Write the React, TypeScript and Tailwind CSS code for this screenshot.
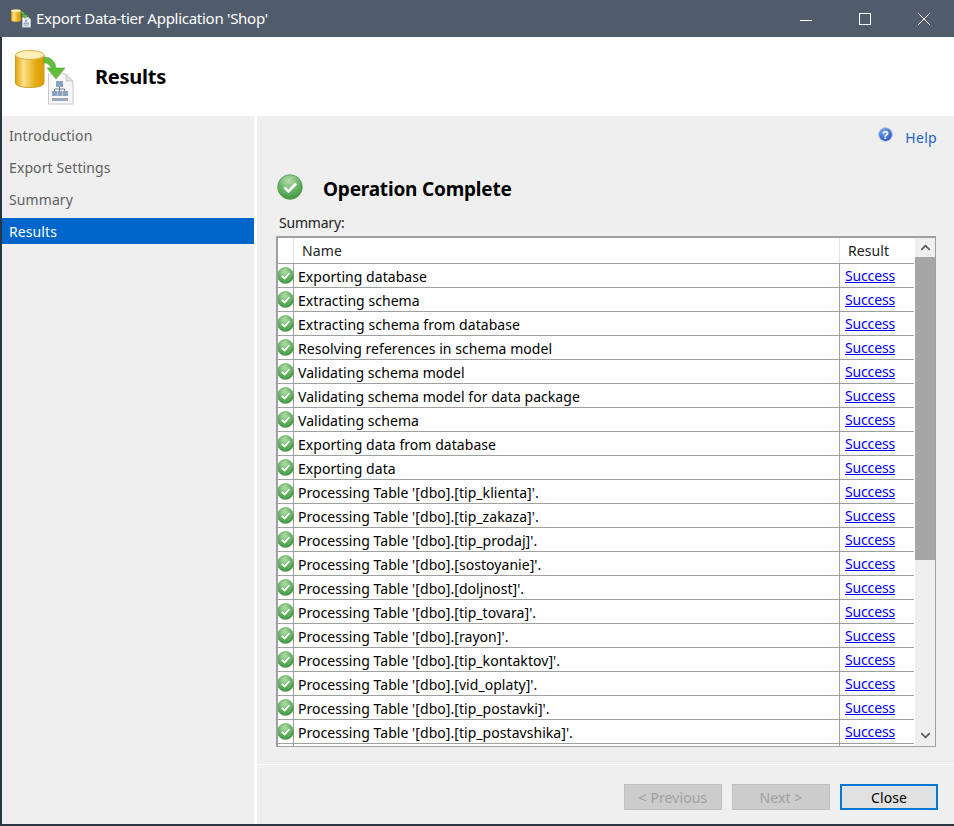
import { useId } from 'react';
import { ChevronUp, ChevronDown } from 'lucide-react';

const rows = [
  'Exporting database',
  'Extracting schema',
  'Extracting schema from database',
  'Resolving references in schema model',
  'Validating schema model',
  'Validating schema model for data package',
  'Validating schema',
  'Exporting data from database',
  'Exporting data',
  "Processing Table '[dbo].[tip_klienta]'.",
  "Processing Table '[dbo].[tip_zakaza]'.",
  "Processing Table '[dbo].[tip_prodaj]'.",
  "Processing Table '[dbo].[sostoyanie]'.",
  "Processing Table '[dbo].[doljnost]'.",
  "Processing Table '[dbo].[tip_tovara]'.",
  "Processing Table '[dbo].[rayon]'.",
  "Processing Table '[dbo].[tip_kontaktov]'.",
  "Processing Table '[dbo].[vid_oplaty]'.",
  "Processing Table '[dbo].[tip_postavki]'.",
  "Processing Table '[dbo].[tip_postavshika]'.",
];

const navItems = ['Introduction', 'Export Settings', 'Summary', 'Results'];

function CheckIcon({ size }: { size: number }) {
  const id = useId();
  return (
    <svg width={size} height={size} viewBox="0 0 26 26" className="shrink-0">
      <defs>
        <radialGradient id={id} cx="45%" cy="25%" r="85%">
          <stop offset="0%" stopColor="#b5dcae" />
          <stop offset="50%" stopColor="#69b565" />
          <stop offset="100%" stopColor="#348a35" />
        </radialGradient>
      </defs>
      <circle cx="13" cy="13" r="12.3" fill={`url(#${id})`} stroke="#4f9a4f" strokeWidth="0.8" />
      <path d="M7.5 13.5 L11.5 17.5 L19 9.5" fill="none" stroke="#fff" strokeWidth="2.6" />
    </svg>
  );
}

function ExportDbIcon({ width }: { width: number }) {
  const id = useId();
  return (
    <svg width={width} height={(width * 55) / 59} viewBox="0 0 59 55" className="shrink-0">
      <defs>
        <linearGradient id={`${id}-body`} x1="0" x2="1" y1="0" y2="0">
          <stop offset="0%" stopColor="#e2a206" />
          <stop offset="28%" stopColor="#fbe28a" />
          <stop offset="70%" stopColor="#e6ac14" />
          <stop offset="100%" stopColor="#dc9c00" />
        </linearGradient>
      </defs>
      <path d="M0.500 5 V33 C0.500 39 29 39 29 33 V5 Z" fill={`url(#${id}-body)`} stroke="#c99a2e" />
      <ellipse cx="14.750" cy="5" rx="14.250" ry="4.500" fill="#fdf0b8" stroke="#d9ae45" />
      <path d="M33.500 24 H51 L58 31 V54 H33.500 Z" fill="#f7f7f7" stroke="#c8c8c8" />
      <path d="M51 24 V31 H58" fill="#dedede" stroke="#c8c8c8" />
      <path d="M29 7 C36 7 40 11 41 18 L50 18 L41 29 L32 18 L36 18 C35 15 33 13 29 13 Z" fill="#62bd3a" stroke="#4a9e2a" strokeWidth="0.5" />
      <rect x="41" y="31" width="7" height="6" fill="#8aa2c0" />
      <path d="M44.500 37 V39 M39.500 41 V39 H49.500 V41 M44.500 39 V41" stroke="#6f7f94" fill="none" />
      <rect x="37" y="41" width="5" height="5" fill="#8aa2c0" />
      <rect x="42.500" y="41" width="5" height="5" fill="#8aa2c0" />
      <rect x="48" y="41" width="5" height="5" fill="#8aa2c0" />
      <rect x="37" y="48" width="16" height="3" fill="#9aa9bb" />
    </svg>
  );
}

function HelpIcon() {
  const id = useId();
  return (
    <svg width="15" height="15" viewBox="0 0 15 15">
      <defs>
        <radialGradient id={id} cx="40%" cy="30%" r="75%">
          <stop offset="0%" stopColor="#7fa8f0" />
          <stop offset="100%" stopColor="#1f4fc0" />
        </radialGradient>
      </defs>
      <circle cx="7.500" cy="7.500" r="6.800" fill={`url(#${id})`} stroke="#a9c4ee" />
      <text x="7.500" y="11.500" textAnchor="middle" fontSize="11" fontWeight="700" fill="#fff" fontFamily="'Liberation Sans', sans-serif">?</text>
    </svg>
  );
}

function Row({ name }: { name: string }) {
  return (
    <div className="flex h-6 border-b border-[#a0a0a0]">
      <div className="flex w-[16px] shrink-0 items-start border-r border-[#a0a0a0] pt-[3px]">
        <div className="-ml-px"><CheckIcon size={17} /></div>
      </div>
      <div className="flex-1 truncate pl-[4px] leading-[25px] tracking-[0.05px] text-black">{name}</div>
      <div className="w-[75px] shrink-0 border-l border-[#a0a0a0] pl-[5px] leading-[24px] tracking-[-0.15px]">
        <span className="text-[#0000ff] underline">Success</span>
      </div>
    </div>
  );
}

export default function App() {
  return (
    <div className="flex h-[826px] w-[954px] flex-col overflow-hidden bg-white font-['Noto_Sans',sans-serif] text-[14px] tracking-[0.1px]">
      {/* title bar */}
      <div className="flex h-[37px] shrink-0 items-center bg-[#505c6b] pl-[11px] text-white">
        <ExportDbIcon width={20} />
        <span className="mb-[1px] ml-[5px] text-[15px] tracking-[-0.27px]">Export Data-tier Application 'Shop'</span>
        <div className="ml-auto flex items-center">
          <svg width="14" height="14" viewBox="0 0 14 14" className="mr-[45px]" fill="none" stroke="#fff">
            <path d="M1 8.500 H13" />
          </svg>
          <svg width="14" height="14" viewBox="0 0 14 14" className="mr-[45px]" fill="none" stroke="#fff">
            <rect x="1.500" y="1.500" width="11" height="11" />
          </svg>
          <svg width="14" height="14" viewBox="0 0 14 14" className="mr-[23px]" fill="none" stroke="#fff">
            <path d="M1 1 L13 13 M13 1 L1 13" />
          </svg>
        </div>
      </div>

      <div className="flex flex-1 flex-col border-b-2 border-l-2 border-[#2a3542]">
        {/* header */}
        <div className="flex h-[79px] shrink-0 items-center pl-[13px] pt-[2px]">
          <ExportDbIcon width={59} />
          <span className="mb-[1px] ml-[21px] text-[20px] font-bold tracking-[-0.25px] text-black">Results</span>
        </div>

        <div className="flex min-h-0 flex-1 gap-[3px]">
          {/* sidebar */}
          <div className="w-[252px] shrink-0 bg-[#efefef] pt-[6px]">
            {navItems.map((item) => (
              <div
                key={item}
                className={`mb-[6px] h-[26px] pl-[7px] leading-[28px] ${item === 'Results' ? 'bg-[#0066cc] text-white' : 'text-[#5f5f5f]'}`}
              >
                {item}
              </div>
            ))}
          </div>

          {/* main */}
          <div className="flex min-w-0 flex-1 flex-col bg-[#efefef]">
            <div className="flex h-[648px] shrink-0 flex-col pl-[19px]">
              <div className="mr-[17px] flex h-[22px] items-start justify-end pt-[8px] text-[#1c62c4]">
                <div className="mr-[12px] mt-[3px]"><HelpIcon /></div>
                <span className="mt-[3px] tracking-[0.3px]">Help</span>
              </div>
              <div className="ml-px mt-[36px] flex h-[26px] items-center">
                <CheckIcon size={26} />
                <span className="ml-[20px] mt-[5px] text-[19px] font-bold tracking-[-0.2px] text-black">Operation Complete</span>
              </div>
              <div className="mb-[3px] ml-[3px] mt-[13px] leading-[20px] tracking-[-0.2px] text-[#222]">Summary:</div>

              <div className="flex h-[511px] w-[660px] border border-l-2 border-t-2 border-[#a0a0a0] bg-white">
                <div className="min-w-0 flex-1 overflow-hidden">
                  <div className="flex h-[26px] border-b border-[#a0a0a0]">
                    <div className="w-[16px] shrink-0 border-r border-[#e3e3e3]" />
                    <div className="flex-1 pl-[8px] leading-[25px] text-[#222]">Name</div>
                    <div className="w-[75px] shrink-0 border-l border-[#e3e3e3] pl-[8px] leading-[25px] text-[#222]">Result</div>
                  </div>
                  {rows.map((r) => (
                    <Row key={r} name={r} />
                  ))}
                  <div className="flex h-6">
                    <div className="w-[16px] shrink-0 border-r border-[#a0a0a0]" />
                    <div className="flex-1" />
                    <div className="w-[75px] shrink-0 border-l border-[#a0a0a0]" />
                  </div>
                </div>
                {/* scrollbar */}
                <div className="flex w-[21px] shrink-0 flex-col items-center border-l border-white bg-[#efefef]">
                  <div className="flex h-[19px] items-center justify-center"><ChevronUp size={15} strokeWidth={2.5} className="text-[#555]" /></div>
                  <div className="h-[303px] w-full bg-[#a6a6a6]" />
                  <div className="flex flex-1 items-end justify-center pb-[3px]"><ChevronDown size={15} strokeWidth={2.5} className="text-[#555]" /></div>
                </div>
              </div>
            </div>

            {/* footer */}
            <div className="flex flex-1 items-start justify-end gap-[10px] border-t border-white pr-[16px] pt-[19px]">
              <button className="h-[26px] w-[98px] border border-[#bfbfbf] bg-[#cccccc] text-[#a0a0a0]">&lt; Previous</button>
              <button className="h-[26px] w-[98px] border border-[#bfbfbf] bg-[#cccccc] text-[#a0a0a0]">Next &gt;</button>
              <button className="h-[26px] w-[98px] border-2 border-[#0078d7] bg-[#e1e1e1] text-black">Close</button>
            </div>
          </div>
        </div>
      </div>
    </div>
  );
}
